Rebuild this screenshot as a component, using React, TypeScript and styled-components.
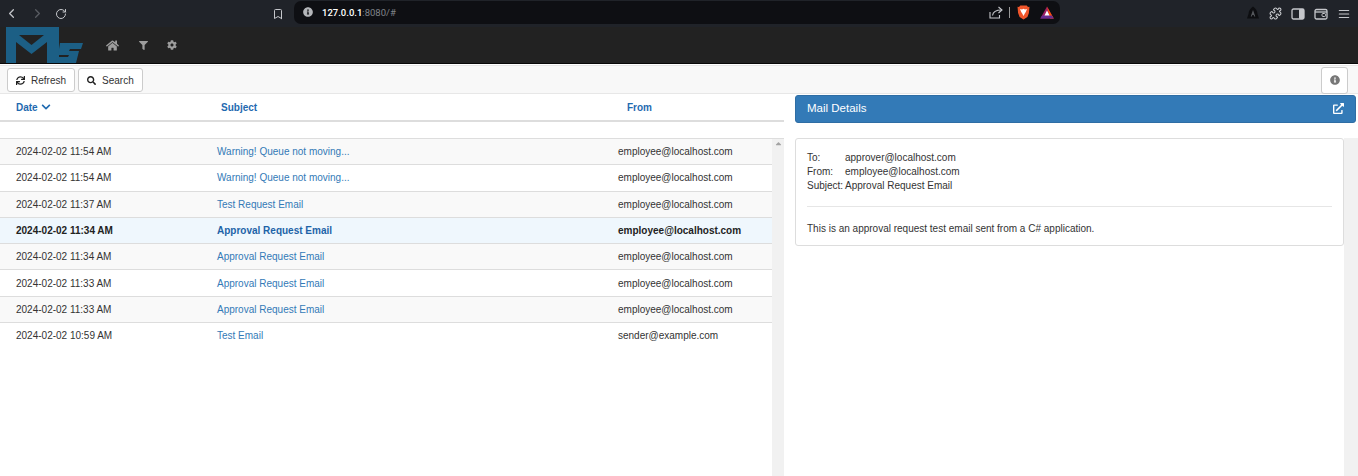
import * as React from "react";
import styled, { createGlobalStyle } from "styled-components";
import {
  FaHome,
  FaFilter,
  FaCog,
  FaSync,
  FaSearch,
  FaInfoCircle,
  FaChevronDown,
  FaExternalLinkAlt,
  FaCaretUp,
} from "react-icons/fa";
import { LuChevronLeft, LuChevronRight, LuRotateCw, LuBookmark, LuPuzzle, LuMenu } from "react-icons/lu";

const GlobalStyle = createGlobalStyle`
  html, body {
    margin: 0;
    padding: 0;
    height: 476px;
    overflow: hidden;
    background: #fff;
    font-family: "Liberation Sans", Arial, sans-serif;
    font-size: 12px;
    color: #333;
  }
`;

const Page = styled.div`
  width: 1358px;
  height: 476px;
  display: flex;
  flex-direction: column;
  overflow: hidden;
`;

const BrowserBar = styled.div`
  height: 27px;
  background: #202329;
  display: flex;
  align-items: center;
  flex: none;
`;

const NavIcons = styled.div`
  width: 270px;
  display: flex;
  align-items: center;
  color: #c5c7cb;
  padding-left: 4px;
  box-sizing: border-box;
`;

const BrowserIcon = styled.span<{ $dim?: boolean; $left?: number }>`
  display: flex;
  margin-left: ${(p) => p.$left ?? 0}px;
  color: ${(p) => (p.$dim ? "#5a5d63" : "#c5c7cb")};
`;

const AddressBar = styled.div`
  margin-left: 24px;
  width: 766px;
  height: 23px;
  margin-top: -3px;
  background: #0e0f13;
  border-radius: 7px;
  display: flex;
  align-items: center;
  padding: 0 6px 0 9px;
  box-sizing: border-box;
  color: #fff;
  font-family: "Roboto", sans-serif;
  font-size: 9.5px;
`;

const Url = styled.span`
  margin-left: 9px;
  font-weight: 500;
  flex: 1;
`;

const UrlRest = styled.span`
  color: #80848a;
  font-weight: 400;
`;

const Divider = styled.span`
  width: 1px;
  height: 11px;
  background: #999;
  margin: 0 7px 0 6px;
`;

const ExtensionIcons = styled.div`
  margin-left: auto;
  width: 112px;
  display: flex;
  align-items: center;
  justify-content: space-between;
  padding-right: 7px;
  box-sizing: border-box;
  color: #c5c7cb;
`;

const Navbar = styled.div`
  height: 36px;
  flex: none;
  background: #222;
  border-bottom: 1px solid #080808;
  box-sizing: content-box;
  display: flex;
  align-items: flex-start;
  overflow: hidden;
`;

const LogoBox = styled.div`
  width: 106px;
  height: 36px;
  flex: none;
`;

const NavItem = styled.a<{ $width: number }>`
  width: ${(p) => p.$width}px;
  height: 36px;
  display: flex;
  align-items: center;
  justify-content: center;
  color: #9d9d9d;
  flex: none;
`;

const Toolbar = styled.div`
  height: 29px;
  box-sizing: border-box;
  flex: none;
  margin-top: 1px;
  background: #f8f8f8;
  border-top: 1px solid #e7e7e7;
  border-bottom: 1px solid #e7e7e7;
  display: flex;
  align-items: center;
  padding: 1px 10px 0 7px;
  gap: 3px;
`;

const ToolButton = styled.button`
  height: 24px;
  background: #fff;
  border: 1px solid #ccc;
  border-radius: 3px;
  padding: 0 8px;
  display: flex;
  align-items: center;
  gap: 6px;
  font-family: "Liberation Sans", Arial, sans-serif;
  font-size: 10px;
  color: #333;
`;

const InfoButton = styled(ToolButton)`
  margin-left: auto;
  width: 27px;
  height: 27px;
  padding: 0;
  justify-content: center;
  color: #777;
`;

const Content = styled.div`
  flex: 1;
  display: flex;
  min-height: 0;
`;

const ListPane = styled.div`
  width: 784px;
  flex: none;
  display: flex;
  flex-direction: column;
`;

const ColumnHeader = styled.div`
  height: 26px;
  flex: none;
  display: grid;
  grid-template-columns: 221px 406px 1fr;
  align-items: center;
  border-bottom: 2px solid #ddd;
  color: #1f6ab0;
  font-size: 10px;
  font-weight: 700;
`;

const HeaderCell = styled.div<{ $pad: number }>`
  padding-left: ${(p) => p.$pad}px;
  display: flex;
  align-items: center;
  gap: 3px;
`;

const ListScroller = styled.div`
  margin-top: 16px;
  flex: 1;
  display: flex;
  min-height: 0;
  border-top: 1px solid #ddd;
`;

const Rows = styled.div`
  flex: 1;
`;

const Row = styled.div<{ $striped?: boolean; $active?: boolean }>`
  height: 25.3px;
  box-sizing: content-box;
  border-bottom: 1px solid #ddd;
  display: grid;
  grid-template-columns: 217px 401px 1fr;
  align-items: center;
  font-size: 10px;
  font-weight: ${(p) => (p.$active ? 700 : 400)};
  color: ${(p) => (p.$active ? "#222" : "#333")};
  background: ${(p) => (p.$active ? "#eff7fd" : p.$striped ? "#f9f9f9" : "#fff")};

  &:last-child {
    border-bottom: none;
  }
`;

const DateCell = styled.div`
  padding-left: 16px;
`;

const SubjectCell = styled.a<{ $active?: boolean }>`
  color: ${(p) => (p.$active ? "#1d63a8" : "#337ab7")};
`;

const ScrollTrack = styled.div<{ $width: number }>`
  width: ${(p) => p.$width}px;
  flex: none;
  background: #f1f1f1;
  display: flex;
  justify-content: center;
  align-items: flex-start;
  color: #a3a3a3;
`;

const DetailPane = styled.div`
  flex: 1;
  display: flex;
  flex-direction: column;
  min-width: 0;
  padding-left: 11px;
`;

const DetailHeader = styled.div`
  height: 28px;
  flex: none;
  margin-top: 1px;
  background: #337ab7;
  border: 1px solid #2e6da4;
  border-radius: 3px;
  box-sizing: border-box;
  margin-right: 2px;
  display: flex;
  align-items: center;
  justify-content: space-between;
  padding: 0 11px 2px;
  color: #fff;
  font-size: 11.5px;
`;

const DetailBody = styled.div`
  flex: 1;
  margin-top: 15px;
  display: flex;
  min-height: 0;
`;

const DetailMain = styled.div`
  flex: 1;
`;

const MailCard = styled.div`
  height: 108px;
  box-sizing: border-box;
  background: #fff;
  border: 1px solid #ddd;
  border-radius: 3px;
  padding: 12px 11px 0;
  font-size: 10px;
  color: #333;
`;

const MetaRow = styled.div`
  display: grid;
  grid-template-columns: 38px 1fr;
  line-height: 14.2px;
`;

const CardRule = styled.hr`
  border: none;
  border-top: 1px solid #e6e6e6;
  margin: 12px 0 16px;
`;

const rows = [
  { date: "2024-02-02 11:54 AM", subject: "Warning! Queue not moving...", from: "employee@localhost.com" },
  { date: "2024-02-02 11:54 AM", subject: "Warning! Queue not moving...", from: "employee@localhost.com" },
  { date: "2024-02-02 11:37 AM", subject: "Test Request Email", from: "employee@localhost.com" },
  { date: "2024-02-02 11:34 AM", subject: "Approval Request Email", from: "employee@localhost.com", active: true },
  { date: "2024-02-02 11:34 AM", subject: "Approval Request Email", from: "employee@localhost.com" },
  { date: "2024-02-02 11:33 AM", subject: "Approval Request Email", from: "employee@localhost.com" },
  { date: "2024-02-02 11:33 AM", subject: "Approval Request Email", from: "employee@localhost.com" },
  { date: "2024-02-02 10:59 AM", subject: "Test Email", from: "sender@example.com" },
];

const MsLogo = () => (
  <svg width="84" height="36" viewBox="0 0 84 36">
    <path d="M6 0h53v36H47V15L31.500 27 16 15v21H6z" fill="#1c5f85" />
    <path d="M19 8h25L31.500 18z" fill="#222" />
    <path d="M60 16H83L81 22H70L69 24H79L76 36H55L57 30H68L69 28H58z" fill="#1c5f85" />
  </svg>
);

const BraveIcon = () => (
  <svg width="13" height="15" viewBox="0 0 13 15">
    <path d="M3.300 0.500h6.400l1.300 1.400 1.500-.2-.6 6.300-1.500 3.900-3.900 2.600-3.900-2.600-1.500-3.900L.500 1.700l1.500.2z" fill="#f0562b" />
    <path d="M3 4l2 .5 1.500-.7 1.500.7 2-.5-1.200 3-1 1.500L6.500 11 5.200 8.500l-1-1.500z" fill="#fff" />
  </svg>
);

const BatIcon = () => (
  <svg width="14" height="13" viewBox="0 0 14 13">
    <path d="M7 0.500L13.700 12.500H.3z" fill="#9e1f63" />
    <path d="M7 0.500L13.700 12.500H10z" fill="#ff5000" />
    <path d="M.3 12.500H13.700L11.800 9.500H2.200z" fill="#662d91" />
    <path d="M7 4.500L9.500 9.500H4.500z" fill="#fff" />
  </svg>
);

const ShareIcon = () => (
  <svg width="14" height="13" viewBox="0 0 14 13" fill="none" stroke="#c5c7cb" strokeWidth="1.100">
    <path d="M1 6v6h9.500V9" />
    <path d="M3.500 9.500C4 6 6.500 4 12.500 4" />
    <path d="M9.500 1l3.500 3-3.500 3" />
  </svg>
);

const ShieldIcon = () => (
  <svg width="14" height="15" viewBox="0 0 14 15">
    <path d="M7 0.500C9.500 2 11.500 5 11.500 8L13 12.500H1L2.500 8C2.500 5 4.500 2 7 0.500z" fill="#0d0e11" />
    <path d="M7 4L9.300 10.500H8.200L7.700 9H6.300L5.800 10.500H4.700z" fill="#55585d" />
  </svg>
);

const SidebarIcon = () => (
  <svg width="14" height="12" viewBox="0 0 14 12">
    <rect x="1" y="1" width="12" height="10" rx="1.500" fill="none" stroke="#c5c7cb" strokeWidth="1.300" />
    <rect x="8" y="1" width="5" height="10" rx="1" fill="#c5c7cb" />
  </svg>
);

const WalletIcon = () => (
  <svg width="14" height="12" viewBox="0 0 14 12">
    <rect x="1" y="1.500" width="12" height="9.500" rx="1.500" fill="none" stroke="#c5c7cb" strokeWidth="1.300" />
    <path d="M1 4h12" stroke="#c5c7cb" strokeWidth="1.300" />
    <rect x="8" y="5.500" width="3.500" height="3" rx="1" fill="none" stroke="#c5c7cb" />
  </svg>
);

const App = () => {
  return (
    <Page>
      <GlobalStyle />
      <BrowserBar>
        <NavIcons>
          <BrowserIcon><LuChevronLeft size={15} /></BrowserIcon>
          <BrowserIcon $dim $left={11}><LuChevronRight size={15} /></BrowserIcon>
          <BrowserIcon $left={10}><LuRotateCw size={12} /></BrowserIcon>
          <BrowserIcon $left={205}><LuBookmark size={12} /></BrowserIcon>
        </NavIcons>
        <AddressBar>
          <FaInfoCircle size={10} color="#b4b6ba" />
          <Url>
            127.0.0.1<UrlRest>:8080/#</UrlRest>
          </Url>
          <BrowserIcon><ShareIcon /></BrowserIcon>
          <Divider />
          <BraveIcon />
          <BrowserIcon $left={10}><BatIcon /></BrowserIcon>
        </AddressBar>
        <ExtensionIcons>
          <ShieldIcon />
          <LuPuzzle size={13} />
          <SidebarIcon />
          <WalletIcon />
          <LuMenu size={14} />
        </ExtensionIcons>
      </BrowserBar>
      <Navbar>
        <LogoBox>
          <MsLogo />
        </LogoBox>
        <NavItem $width={13}><FaHome size={13} /></NavItem>
        <NavItem $width={48}><FaFilter size={9} /></NavItem>
        <NavItem $width={10}><FaCog size={10} /></NavItem>
      </Navbar>
      <Toolbar>
        <ToolButton><FaSync size={9} color="#222" />Refresh</ToolButton>
        <ToolButton><FaSearch size={9} color="#222" />Search</ToolButton>
        <InfoButton><FaInfoCircle size={10} /></InfoButton>
      </Toolbar>
      <Content>
        <ListPane>
          <ColumnHeader>
            <HeaderCell $pad={16}>Date <FaChevronDown size={10} /></HeaderCell>
            <HeaderCell $pad={0}>Subject</HeaderCell>
            <HeaderCell $pad={0}>From</HeaderCell>
          </ColumnHeader>
          <ListScroller>
            <Rows>
              {rows.map((r, i) => (
                <Row key={i} $striped={i % 2 === 0} $active={r.active}>
                  <DateCell>{r.date}</DateCell>
                  <SubjectCell $active={r.active}>{r.subject}</SubjectCell>
                  <div>{r.from}</div>
                </Row>
              ))}
            </Rows>
            <ScrollTrack $width={12}><FaCaretUp size={9} /></ScrollTrack>
          </ListScroller>
        </ListPane>
        <DetailPane>
          <DetailHeader>
            Mail Details
            <FaExternalLinkAlt size={11} />
          </DetailHeader>
          <DetailBody>
            <DetailMain>
              <MailCard>
                <MetaRow><span>To:</span><span>approver@localhost.com</span></MetaRow>
                <MetaRow><span>From:</span><span>employee@localhost.com</span></MetaRow>
                <MetaRow><span>Subject:</span><span>Approval Request Email</span></MetaRow>
                <CardRule />
                This is an approval request test email sent from a C# application.
              </MailCard>
            </DetailMain>
            <ScrollTrack $width={14} />
          </DetailBody>
        </DetailPane>
      </Content>
    </Page>
  );
};

export default App;
